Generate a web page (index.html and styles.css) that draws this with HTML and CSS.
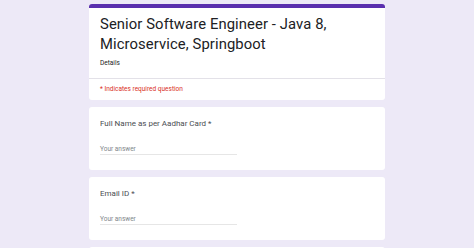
FILE: index.html
```
<html>
<head>
	<title>Senior Software Engineer - Java 8, Microservice, Springboot</title>
<link rel="stylesheet" href="styles.css">
</head>
<body>
	<div id='form'>
		<div class='card header'>
			<div class='head-top'>
				<div class='title'>Senior Software Engineer - Java 8, Microservice, Springboot</div>
				<div class='details'>Details</div>
			</div>
			<div class='required'>* Indicates required question</div>
		</div>

		<div class='card question'>
			<div class='label'>Full Name as per Aadhar Card *</div>
			<div class='answer'>Your answer</div>
		</div>

		<div class='card question'>
			<div class='label'>Email ID *</div>
			<div class='answer'>Your answer</div>
		</div>

		<div class='card question'></div>
	</div>
</body>
</html>
```

FILE: styles.css
```
body{
	margin:0;
	background-color:#ede9f7;
	font-family: Roboto, "Open Sans", sans-serif;
	color:#202124;
	overflow:hidden;
}
#form{
	width:296px;
	margin-left:89px;
	padding-top:4px;
	display:flex;
	flex-direction:column;
	gap:7px;
}
.card{
	background-color:white;
	border-radius:3px;
}
.header{
	border-top:4px solid #5a2fae;
}
.head-top{
	padding:6px 11px 10px 11px;
	border-bottom:1px solid #e3e1e8;
}
.title{
	font-size:14.8px;
	line-height:20px;
	letter-spacing:0.1px;
	width:260px;
}
.details{
	font-size:6.5px;
	line-height:10px;
	margin-top:4px;
}
.required{
	padding:5px 11px 6px 11px;
	font-size:6.5px;
	line-height:10px;
	color:#d93025;
}
.question{
	padding:12px 11px 15px 11px;
	min-height:36px;
}
.label{
	font-size:8px;
	line-height:10px;
	color:#4a4d52;
}
.answer{
	margin-top:15px;
	width:137px;
	font-size:6.5px;
	line-height:10px;
	color:#80868b;
	border-bottom:1px solid #e6e6e6;
}
```
